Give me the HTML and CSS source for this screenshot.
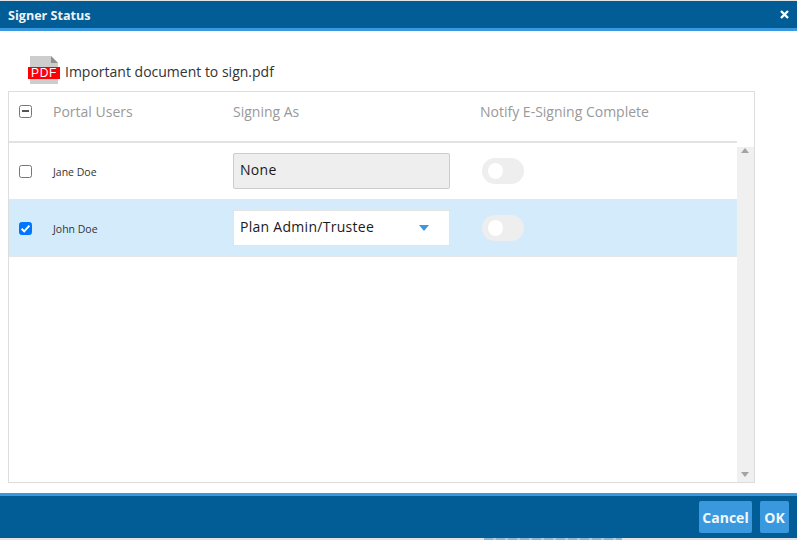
FILE: index.html
```html
<!DOCTYPE html>
<html lang="en">
<head>
<meta charset="utf-8">
<title>Signer Status</title>
<link rel="stylesheet" href="styles.css">
</head>
<body>
<div class="dialog">
  <header class="titlebar">
    <span class="title">Signer Status</span>
    <svg class="close" width="9" height="9" viewBox="0 0 9 9"><path d="M1 1L8 8M8 1L1 8" fill="none" stroke="#fff" stroke-width="2.4"/></svg>
  </header>
  <main class="content">
    <div class="file">
      <svg class="pdf" width="32" height="28" viewBox="0 0 32 28">
        <path d="M2 0H23L30 7V28H2Z" fill="#cdcdcd"/>
        <path d="M23 0L30 7H23Z" fill="#8f8f8f"/>
        <rect x="0" y="11" width="32" height="12" fill="#fb0007"/>
      </svg>
      <span class="pdf-label">PDF</span>
      <span class="file-name">Important document to sign.pdf</span>
    </div>
    <div class="panel">
      <div class="head">
        <span class="cell-check"><span class="box minus"></span></span>
        <span class="col-user">Portal Users</span>
        <span class="col-sign">Signing As</span>
        <span class="col-notify">Notify E-Signing Complete</span>
      </div>
      <div class="body">
        <div class="rows">
          <div class="row">
            <span class="cell-check"><span class="box"></span></span>
            <span class="col-user name">Jane Doe</span>
            <span class="col-sign"><span class="select disabled">None</span></span>
            <span class="col-notify toggle-cell"><span class="toggle"><span class="knob"></span></span></span>
          </div>
          <div class="row selected">
            <span class="cell-check">
              <span class="box checked">
                <svg width="13" height="13" viewBox="0 0 13 13"><path d="M2.6 6.8L5.2 9.4L10.4 3.6" fill="none" stroke="#fff" stroke-width="2"/></svg>
              </span>
            </span>
            <span class="col-user name">John Doe</span>
            <span class="col-sign">
              <span class="select">Plan Admin/Trustee<span class="caret"></span></span>
            </span>
            <span class="col-notify toggle-cell"><span class="toggle"><span class="knob"></span></span></span>
          </div>
        </div>
        <div class="scrollbar">
          <span class="arrow up"></span>
          <span class="arrow down"></span>
        </div>
      </div>
    </div>
  </main>
  <footer class="footer">
    <button class="btn cancel">Cancel</button>
    <button class="btn ok">OK</button>
  </footer>
  <div class="peek"></div>
</div>
</body>
</html>
```
FILE: styles.css
```css
* { box-sizing: border-box; }
html, body { margin: 0; padding: 0; }
body { width: 797px; height: 540px; overflow: hidden; background: #fff; font-family: "Open Sans", sans-serif; }
.dialog { width: 797px; height: 540px; display: flex; flex-direction: column; position: relative; background: #e3e3e3; }
.titlebar { height: 30px; flex: none; margin-top: 1px; background: #025c96; border-bottom: 3px solid #3a99de; display: flex; align-items: center; justify-content: space-between; padding: 1px 8px 0 8px; color: #eef3f7; }
.title { font-size: 12.6px; font-weight: 700; line-height: 26px; padding-top: 1px; }
.close { display: block; margin-top: -1px; }
.content { flex: 1; min-height: 0; padding: 25px 42px 0 8px; display: flex; flex-direction: column; background: #fff; }
.file { height: 35px; flex: none; display: flex; align-items: flex-start; padding-left: 20px; position: relative; }
.pdf { flex: none; margin-right: 5px; }
.pdf-label { position: absolute; left: 20px; top: 11px; width: 32px; text-align: center; color: #fff; font: 12px/12px "Liberation Sans", sans-serif; letter-spacing: .6px; }
.file-name { font-size: 14px; line-height: 18px; margin-top: 7px; color: #333; }
.panel { width: 747px; height: 392px; border: 1px solid #ddd; display: flex; flex-direction: column; flex: none; }
.head { height: 51px; flex: none; width: 728px; border-bottom: 2px solid #e2e2e2; display: flex; align-items: center; font-size: 14px; color: #999; padding-bottom: 10px; }
.cell-check { width: 44px; flex: none; padding-left: 10px; display: flex; }
.col-user { width: 180px; flex: none; }
.col-sign { width: 247px; flex: none; }
.box { width: 13px; height: 13px; border: 1px solid #767676; border-radius: 2.5px; background: #fff; display: block; position: relative; }
.minus::after { content: ""; position: absolute; left: 2px; right: 2px; top: 4px; height: 2px; background: #555; }
.checked { background: #0075ff; border-color: #0075ff; }
.checked svg { position: absolute; left: -1px; top: -1px; display: block; }
.body { flex: 1; min-height: 0; display: flex; }
.rows { width: 728px; flex: none; }
.row { height: 57px; display: flex; align-items: center; border-bottom: 1px solid #e6e6e6; }
.row.selected { background: #d4ebfc; }
.name { font-size: 10.5px; color: #333; padding-top: 1px; }
.select { width: 217px; height: 36px; display: flex; align-items: center; padding: 0 6px 3px; font-size: 14px; font-weight: 500; letter-spacing: .28px; background: #fff; border: 1px solid #e4e4e4; color: #1a1a1a; position: relative; }
.select.disabled { background: #eee; border: 1px solid #ccc; border-radius: 2px; }
.caret { position: absolute; left: 185px; top: 14px; width: 0; height: 0; border: 5px solid transparent; border-top: 6px solid #3a99de; border-bottom: 0; }
.toggle-cell { padding-left: 2px; }
.toggle { width: 42px; height: 26px; background: #eee; border-radius: 13px; display: block; position: relative; }
.knob { position: absolute; left: 6px; top: 5px; width: 15px; height: 16px; border-radius: 50%; background: #fff; }
.scrollbar { width: 17px; flex: none; background: #f0f0f0; margin-top: 4px; position: relative; }
.arrow { position: absolute; left: 4px; width: 0; height: 0; border: 4px solid transparent; }
.arrow.up { top: 1px; border-bottom: 5px solid #a3a3a3; border-top: 0; }
.arrow.down { bottom: 5px; border-top: 5px solid #a3a3a3; border-bottom: 0; }
.footer { height: 45px; flex: none; background: #025c96; border-top: 3px solid #3a99de; display: flex; justify-content: flex-end; align-items: center; gap: 8px; padding: 0 8px 0 0; margin-bottom: 2px; }
.btn { border: 0; background: #3a99de; color: #f2f7fb; font-family: "Open Sans", sans-serif; font-weight: 700; font-size: 14px; height: 32px; border-radius: 2px; padding: 0; }
.cancel { width: 53px; }
.ok { width: 29px; }
.peek { position: absolute; left: 484px; bottom: 0; width: 138px; height: 2px; background: repeating-linear-gradient(90deg, #8fb5d3 0 9px, #b5cde0 9px 12px); }
```
